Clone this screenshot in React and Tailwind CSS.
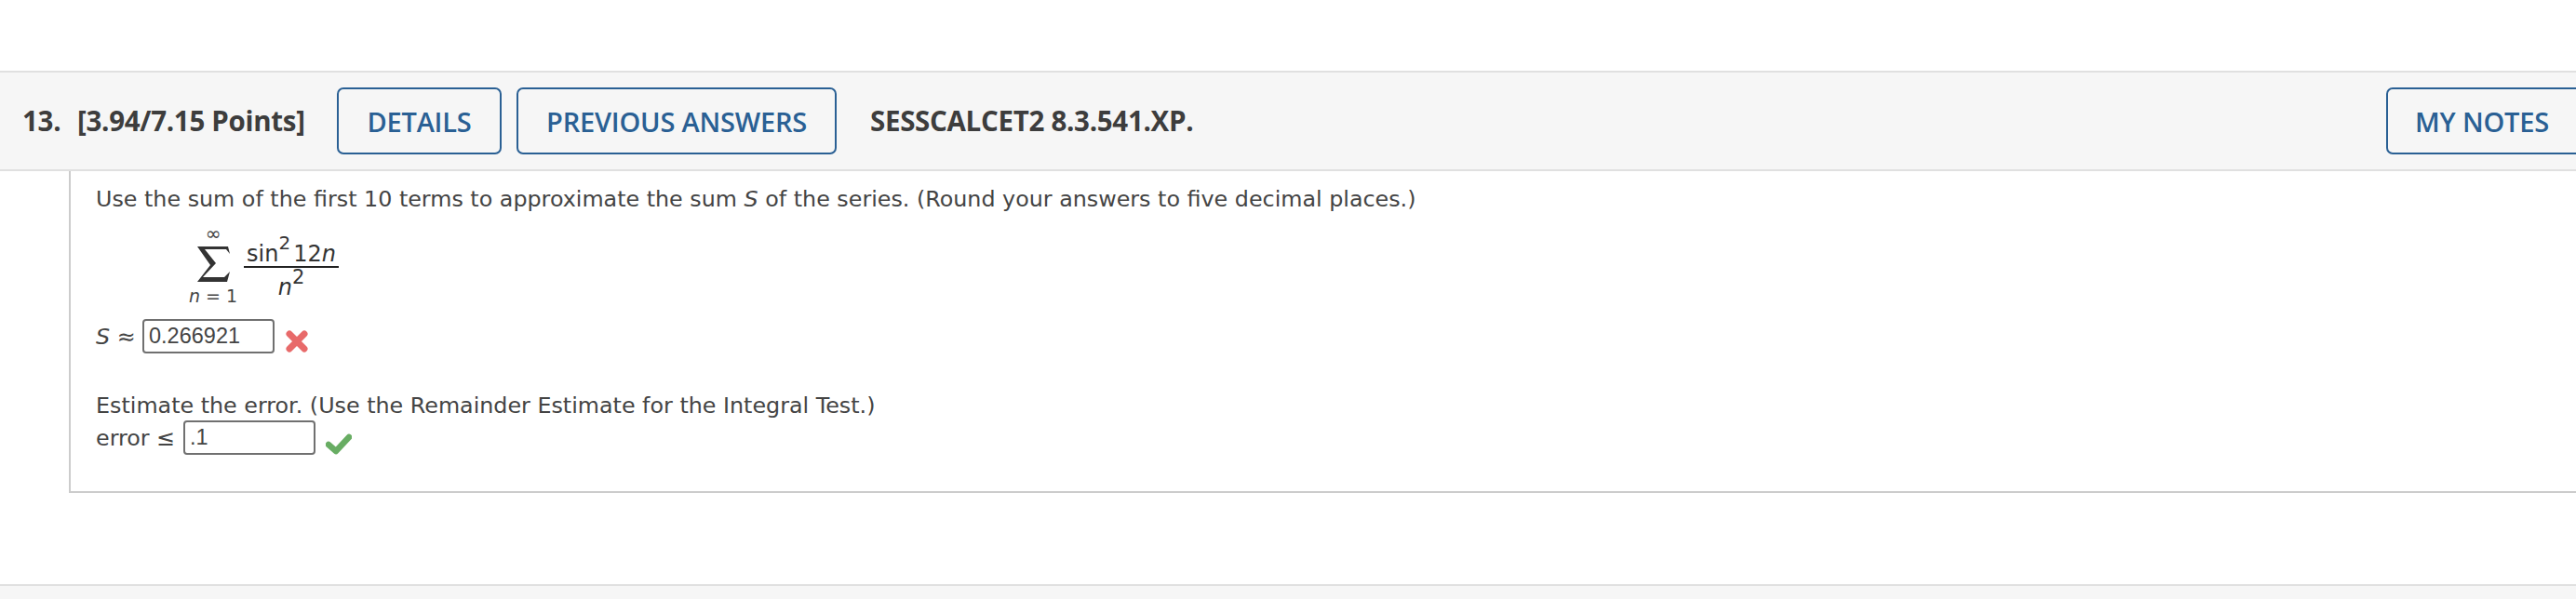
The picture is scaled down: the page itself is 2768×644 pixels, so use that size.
import React from "react";

const Btn = ({ children, className = "" }) => (
  <button className={`h-[72px] rounded-[7px] border-2 border-[#2a6094] pt-[1px] font-['Open_Sans',sans-serif] text-[29px] font-semibold tracking-[-0.2px] text-[#2a6094] ${className}`}>
    {children}
  </button>
);

function CrossIcon() {
  return (
    <svg width="24" height="24" viewBox="0 0 24 24" className="mt-[12px] ml-[12px]">
      <path d="M4 4 L20 20 M20 4 L4 20" stroke="#e86a6a" strokeWidth="7" strokeLinecap="round" />
    </svg>
  );
}

function CheckIcon() {
  return (
    <svg width="28" height="24" viewBox="0 0 28 24" className="mt-[13px] ml-[11px]">
      <path d="M3 13 L11 20 L25 5" fill="none" stroke="#68ad63" strokeWidth="6.5" strokeLinejoin="round" strokeLinecap="round" />
    </svg>
  );
}

function Sigma() {
  return (
    <svg width="37" height="40" viewBox="0 0 37 40">
      <path d="M1 1 H34 L36 9 L32 4 H9 L21 19 L7 34 H30 L36 28 L33 39 H1 L15 21 Z" fill="#333" />
    </svg>
  );
}

export default function App() {
  return (
    <div className="relative h-[644px] w-[2768px] overflow-hidden bg-white font-['DejaVu_Sans',sans-serif] text-[23.8px] text-[#444]">
      <div className="h-[76px]" />
      {/* Question header */}
      <header className="flex h-[108px] items-center border-y-2 border-[#e0e0e0] bg-[#f6f6f6] pl-[24px]">
        <span className="w-[59px] pt-[1px] font-['Open_Sans',sans-serif] text-[29.5px] font-bold tracking-[-0.3px] text-[#3d3d3d]">13.</span>
        <span className="w-[279px] pt-[1px] font-['Open_Sans',sans-serif] text-[29.5px] font-bold tracking-[-0.3px] text-[#3d3d3d]">[3.94/7.15 Points]</span>
        <Btn className="w-[177px]">DETAILS</Btn>
        <Btn className="ml-[16px] w-[344px]">PREVIOUS ANSWERS</Btn>
        <span className="ml-[36px] pt-[1px] font-['Open_Sans',sans-serif] text-[29.5px] font-bold tracking-[-0.3px] text-[#3d3d3d]">SESSCALCET2 8.3.541.XP.</span>
        <Btn className="ml-auto mr-[-20px] w-[224px] pr-[18px]">MY NOTES</Btn>
      </header>

      {/* Question body */}
      <div className="ml-[74px] h-[346px] border-b-2 border-l-2 border-[#cccccc] pl-[27px]">
        <p className="pt-[16px] leading-[28px]">
          Use the sum of the first 10 terms to approximate the sum <i>S</i> of the series. (Round your answers to five decimal places.)
        </p>

        <div className="mt-[16px] flex h-[84px] items-start pl-[100px]">
          <div className="flex w-[52px] flex-col items-center text-[#444]">
            <span className="h-[20px] text-[20px] leading-[15px]">∞</span>
            <Sigma />
            <span className="mt-[4px] whitespace-pre text-[19px] leading-[20px]"><i>n</i> = 1</span>
          </div>
          <div className="ml-[7px] mt-[13px] w-[102px] text-center text-[24px] text-[#333]">
            <div className="h-[31px] border-b-2 border-[#222] leading-[32px] whitespace-nowrap">
              sin<sup className="top-[-0.65em] text-[20px] leading-none">2</sup><span className="ml-[3px]">12<i>n</i></span>
            </div>
            <div className="mt-[7px] leading-[28px]">
              <i>n</i><sup className="top-[-0.55em] text-[21px] leading-none">2</sup>
            </div>
          </div>
        </div>

        <div className="mt-[15px] flex items-start">
          <span className="w-[50px] pt-[5px] leading-[28px] whitespace-pre"><i>S</i> ≈</span>
          <input readOnly value="0.266921" className="h-[37px] w-[142px] rounded-[4px] border-2 border-[#707070] bg-white px-[5px] font-['Liberation_Sans',sans-serif] text-[23.5px] text-[#444]" />
          <CrossIcon />
        </div>

        <p className="mt-[42px] leading-[28px]">Estimate the error. (Use the Remainder Estimate for the Integral Test.)</p>
        <div className="mt-[2px] flex items-start">
          <span className="w-[94px] pt-[5px] leading-[28px] whitespace-pre">error ≤</span>
          <input readOnly value=".1" className="h-[37px] w-[142px] rounded-[4px] border-2 border-[#707070] bg-white px-[5px] font-['Liberation_Sans',sans-serif] text-[23.5px] text-[#444]" />
          <CheckIcon />
        </div>
      </div>

      <div className="mt-[98px] h-[20px] border-t-2 border-[#e0e0e0] bg-[#f6f6f6]" />
    </div>
  );
}
